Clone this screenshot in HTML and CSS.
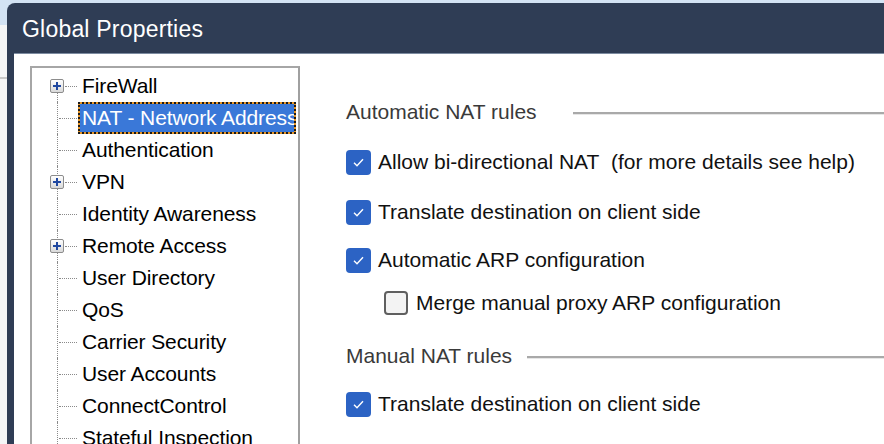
FILE: index.html
```html
<!DOCTYPE html>
<html>
<head>
<meta charset="utf-8">
<title>Global Properties</title>
<link rel="stylesheet" href="styles.css">
</head>
<body>
<div class="window">
  <div class="titlebar"><span class="title">Global Properties</span></div>
  <div class="client">
    <div class="tree">
      <ul class="tree-list">
        <li class="node has-children first"><span class="gutter"><span class="expander"><svg viewBox="0 0 12 12" width="12" height="12"><path d="M2 6h8M6 2v8" stroke="#2048a0" stroke-width="2"/></svg></span></span><span class="label">FireWall</span></li>
        <li class="node selected"><span class="gutter"></span><span class="label">NAT - Network Address Translation</span></li>
        <li class="node"><span class="gutter"></span><span class="label">Authentication</span></li>
        <li class="node has-children"><span class="gutter"><span class="expander"><svg viewBox="0 0 12 12" width="12" height="12"><path d="M2 6h8M6 2v8" stroke="#2048a0" stroke-width="2"/></svg></span></span><span class="label">VPN</span></li>
        <li class="node"><span class="gutter"></span><span class="label">Identity Awareness</span></li>
        <li class="node has-children"><span class="gutter"><span class="expander"><svg viewBox="0 0 12 12" width="12" height="12"><path d="M2 6h8M6 2v8" stroke="#2048a0" stroke-width="2"/></svg></span></span><span class="label">Remote Access</span></li>
        <li class="node"><span class="gutter"></span><span class="label">User Directory</span></li>
        <li class="node"><span class="gutter"></span><span class="label">QoS</span></li>
        <li class="node"><span class="gutter"></span><span class="label">Carrier Security</span></li>
        <li class="node"><span class="gutter"></span><span class="label">User Accounts</span></li>
        <li class="node"><span class="gutter"></span><span class="label">ConnectControl</span></li>
        <li class="node"><span class="gutter"></span><span class="label">Stateful Inspection</span></li>
      </ul>
    </div>
    <div class="panel">
      <div class="group-heading heading-auto">Automatic NAT rules</div>
      <label class="check-row row-1"><span class="box checked"><svg viewBox="0 0 25 25" width="25" height="25"><path d="M8 12.8l3 3 6-6.6" fill="none" stroke="#fff" stroke-width="1.4"/></svg></span><span class="text">Allow bi-directional NAT&nbsp; (for more details see help)</span></label>
      <label class="check-row row-2"><span class="box checked"><svg viewBox="0 0 25 25" width="25" height="25"><path d="M8 12.8l3 3 6-6.6" fill="none" stroke="#fff" stroke-width="1.4"/></svg></span><span class="text">Translate destination on client side</span></label>
      <label class="check-row row-3"><span class="box checked"><svg viewBox="0 0 25 25" width="25" height="25"><path d="M8 12.8l3 3 6-6.6" fill="none" stroke="#fff" stroke-width="1.4"/></svg></span><span class="text">Automatic ARP configuration</span></label>
      <label class="check-row row-sub"><span class="box unchecked"></span><span class="text">Merge manual proxy ARP configuration</span></label>
      <div class="group-heading heading-manual">Manual NAT rules</div>
      <label class="check-row row-last"><span class="box checked"><svg viewBox="0 0 25 25" width="25" height="25"><path d="M8 12.8l3 3 6-6.6" fill="none" stroke="#fff" stroke-width="1.4"/></svg></span><span class="text">Translate destination on client side</span></label>
    </div>
  </div>
</div>
</body>
</html>
```

FILE: styles.css
```css
html, body {
  margin: 0;
  padding: 0;
  height: 444px;
  overflow: hidden;
}

body {
  background: linear-gradient(to bottom, #d3e3f4 0, #d3e3f4 25px, #f5f6f7 25px, #f5f6f7 77px, #c9c9c9 77px, #c9c9c9 79px, #f5f6f7 79px);
  font-family: "Liberation Sans", Arial, sans-serif;
  display: flex;
  flex-direction: column;
}

.window {
  flex: 1;
  margin: 3px 0 0 7px;
  background: #2f3d55;
  border-radius: 8px 0 0 0;
  padding-left: 7px;
  display: flex;
  flex-direction: column;
}

.titlebar {
  height: 50px;
  flex: none;
  display: flex;
  align-items: center;
  padding: 2px 0 0 8px;
  box-sizing: border-box;
}

.title {
  color: #ffffff;
  font-size: 23px;
  letter-spacing: 0.2px;
}

.client {
  flex: 1;
  background: #ffffff;
  border-top: 1px solid #7c8ba0;
  display: flex;
  align-items: flex-start;
  padding: 12px 0 0 16px;
  overflow: hidden;
}

.tree {
  width: 270px;
  height: 400px;
  box-sizing: border-box;
  border: 2px solid #a6a6a6;
  border-right-color: #a0a0a0;
  overflow: hidden;
  flex: none;
  background: #ffffff;
}

.tree-list {
  list-style: none;
  margin: 0;
  padding: 2px 0 0 0;
}

.node {
  display: flex;
  align-items: center;
  height: 32px;
}

.gutter {
  position: relative;
  width: 46px;
  height: 100%;
  flex: none;
}

.gutter::before {
  content: "";
  position: absolute;
  left: 25px;
  top: 0;
  bottom: 0;
  border-left: 1px dotted #8a8a8a;
}

.first .gutter::before {
  top: 23px;
}

.gutter::after {
  content: "";
  position: absolute;
  left: 27px;
  width: 18px;
  top: 16px;
  border-top: 1px dotted #8a8a8a;
}

.has-children .gutter::after {
  left: 33px;
  width: 12px;
}

.expander {
  position: absolute;
  left: 18px;
  top: 9px;
  width: 12px;
  height: 12px;
  border: 1px solid #8c8c8c;
  border-radius: 2px;
  background: linear-gradient(#ffffff, #d9d9d9);
  z-index: 1;
  display: flex;
}

.label {
  flex: 1;
  min-width: 0;
  margin-right: 2px;
  height: 32px;
  line-height: 32px;
  padding: 0 4px;
  box-sizing: border-box;
  font-size: 21px;
  color: #000000;
  white-space: nowrap;
  overflow: hidden;
  letter-spacing: -0.1px;
}

.selected .label {
  color: #ffffff;
  border: 2px dotted #1b1b1b;
  line-height: 28px;
  padding: 0 2px;
  background: linear-gradient(#3a78d8, #3a78d8) padding-box, #e69526 border-box;
}

.panel {
  flex: 1;
  margin-left: 46px;
  padding-top: 31px;
  display: flex;
  flex-direction: column;
  min-width: 0;
}

.group-heading {
  display: flex;
  align-items: center;
  height: 30px;
  font-size: 21px;
  color: #3a3a3a;
  white-space: nowrap;
}

.group-heading::after {
  content: "";
  flex: 1;
  height: 0;
  border-top: 2px solid #a9a9a9;
  border-bottom: 1px solid #e6e6e6;
  margin-top: 2px;
}

.heading-auto::after {
  margin-left: 36px;
}

.heading-manual {
  margin-top: 23px;
}

.heading-manual::after {
  margin-left: 15px;
}

.check-row {
  display: flex;
  align-items: center;
  height: 30px;
  gap: 7px;
  font-size: 21px;
  color: #111111;
  white-space: nowrap;
}

.row-1 { margin-top: 20px; }
.row-2 { margin-top: 20px; }
.row-3 { margin-top: 18px; }
.row-sub { margin-top: 13px; padding-left: 38px; gap: 8px; }
.row-last { margin-top: 18px; }

.box {
  width: 25px;
  height: 25px;
  flex: none;
  box-sizing: border-box;
  border-radius: 4px;
  display: flex;
}

.box.checked {
  background: #2c63c4;
}

.box.unchecked {
  width: 24px;
  height: 24px;
  background: #f3f3f3;
  border: 2px solid #5f5f5f;
}
```
